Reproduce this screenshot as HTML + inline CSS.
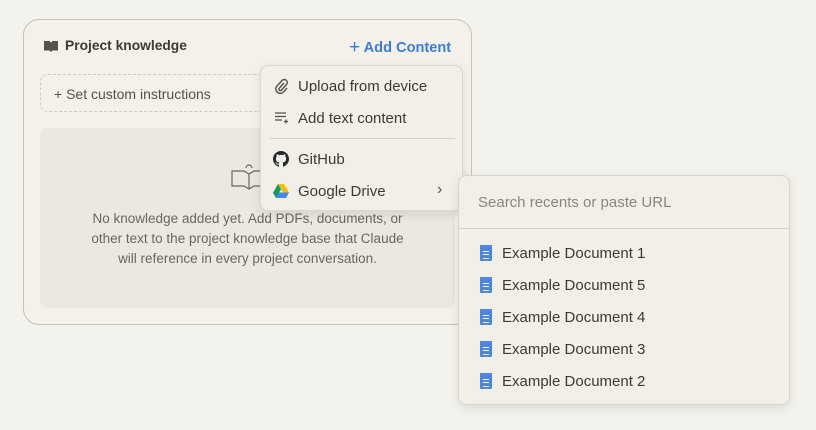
<!DOCTYPE html>
<html><head><style>
*{box-sizing:border-box;margin:0;padding:0}
body{width:816px;height:430px;background:#f4f2ec;font-family:"Liberation Sans",sans-serif;position:relative;overflow:hidden;color:#3d3a33}
.card{position:absolute;left:23px;top:19px;width:449px;height:306px;border:1px solid #c6c2b8;border-radius:16px;background:#f3f1ea}
.abs{position:absolute}
.hdr{left:43px;top:38px;font-size:13.8px;font-weight:bold;color:#3d3a33}
.add{left:349px;top:36px;font-size:14.6px;color:#3b7ddd;font-weight:bold}
.dash{left:40px;top:74px;width:260px;height:38px;border:1px dashed #cfcbc1;border-radius:8px;font-size:14px;color:#555148;padding:11px 0 0 13px}
.grey{left:40px;top:128px;width:415px;height:180px;background:#eae8df;border-radius:8px}
.desc{left:40px;top:209px;width:415px;text-align:center;font-size:13.5px;line-height:20px;color:#6b675e}
.menu{left:260px;top:65px;width:203px;height:146px;background:#f1efe8;border:1px solid #dcd8cf;border-radius:8px;box-shadow:0 3px 10px rgba(0,0,0,.1)}
.mi{position:absolute;left:37px;font-size:15px;color:#3d3a33}
.sub{left:458px;top:175px;width:332px;height:230px;background:#f1efe8;border:1px solid #d8d4cb;border-radius:8px;box-shadow:0 3px 10px rgba(0,0,0,.1)}
.di{position:absolute;left:43px;font-size:15px;color:#3d3a33}
.doc{position:absolute;left:21px;width:12px;height:16px;background:#4a86e8;border-radius:1px}
.doc:after{content:"";position:absolute;left:3px;top:6px;width:6px;height:6px;border-top:1px solid #fff;border-bottom:1px solid #fff}
.doc:before{content:"";position:absolute;left:3px;top:9px;width:6px;height:1px;background:#fff}
</style></head><body>
<div class="card"></div>
<svg class="abs" style="left:44px;top:40px" width="14" height="12" viewBox="0 0 14 12"><path d="M0 1h5.5l1.5 1.5V12L5.5 10.5H0z M14 1H8.5L7 2.5V12l1.5-1.5H14z" fill="#55524a"/></svg>
<div class="abs hdr" style="left:65px">Project knowledge</div>
<div class="abs add"><span style="font-weight:normal;font-size:19px;position:relative;top:1px">+</span> Add Content</div>
<div class="abs dash">+ Set custom instructions</div>
<div class="abs grey"></div>
<svg class="abs" style="left:231px;top:163px" width="36" height="32" viewBox="0 0 36 32"><path d="M1 8h12l5 3 5-3h12v15H23l-5 3-5-3H1z M18 11v15 M15 5a3 3 0 0 1 6 0" fill="none" stroke="#6b675e" stroke-width="1.2"/></svg>
<div class="abs desc">No knowledge added yet. Add PDFs, documents, or<br>other text to the project knowledge base that Claude<br>will reference in every project conversation.</div>
<div class="abs menu">
<svg class="abs" style="left:13px;top:12px" width="14" height="16" viewBox="0 0 14 16"><path d="M10 5l-5 5.5a1.5 1.5 0 0 0 2 2l5.5-6a3 3 0 0 0-4.5-4l-5.5 6a4.5 4.5 0 0 0 6.5 6l4-4.5" fill="none" stroke="#55524a" stroke-width="1.4"/></svg>
<div class="mi" style="top:12px">Upload from device</div>
<svg class="abs" style="left:13px;top:46px" width="14" height="12" viewBox="0 0 14 12"><path d="M1 1h11M1 4.5h11M1 8h7M10 9.5h4M12 7.5v4" stroke="#55524a" stroke-width="1.3" fill="none"/></svg>
<div class="mi" style="top:44px">Add text content</div>
<div class="abs" style="left:9px;top:72px;width:185px;height:1px;background:#d6d2c9"></div>
<svg class="abs" style="left:12px;top:85px" width="16" height="16" viewBox="0 0 16 16"><path fill="#24292f" d="M8 0C3.58 0 0 3.58 0 8c0 3.54 2.29 6.53 5.47 7.590.4.07.55-.17.55-.38 0-.19-.01-.82-.01-1.49-2.01.37-2.53-.49-2.69-.94-.09-.23-.48-.94-.82-1.13-.28-.15-.68-.52-.01-.53.63-.01 1.08.58 1.23.82.72 1.21 1.87.87 2.33.66.07-.52.28-.87.51-1.07-1.78-.2-3.64-.89-3.64-3.95 0-.87.31-1.59.82-2.15-.08-.2-.36-1.02.08-2.12 0 0 .67-.21 2.2.82.64-.18 1.32-.27 2-.27.68 0 1.36.09 2 .27 1.53-1.04 2.2-.82 2.2-.82.44 1.1.16 1.92.08 2.12.51.56.82 1.27.82 2.15 0 3.07-1.87 3.75-3.65 3.95.29.25.54.73.54 1.48 0 1.07-.01 1.93-.01 2.2 0 .21.15.46.55.38A8.013 8.013 0 0 0 16 8c0-4.42-3.58-8-8-8z"/></svg>
<div class="mi" style="top:85px">GitHub</div>
<svg class="abs" style="left:12px;top:118px" width="16" height="14" viewBox="0 0 16 14"><path d="M5 0h6l5 8.5h-6z" fill="#fbbc04"/><path d="M5 0l3 5.3L3 14 0 8.7z" fill="#0f9d58"/><path d="M3 14l2.9-5.5H16L13 14z" fill="#4285f4"/></svg>
<div class="mi" style="top:117px">Google Drive</div>
<div class="abs" style="left:176px;top:115px;font-size:16px;color:#55524a">›</div>
</div>
<div class="abs sub">
<div class="abs" style="left:19px;top:18px;font-size:15px;color:#8a867d">Search recents or paste URL</div>
<div class="abs" style="left:0;top:52px;width:330px;height:1px;background:#d6d2c9"></div>
<div class="doc" style="top:69px"></div><div class="di" style="top:69px">Example Document 1</div>
<div class="doc" style="top:101px"></div><div class="di" style="top:101px">Example Document 5</div>
<div class="doc" style="top:133px"></div><div class="di" style="top:133px">Example Document 4</div>
<div class="doc" style="top:165px"></div><div class="di" style="top:165px">Example Document 3</div>
<div class="doc" style="top:197px"></div><div class="di" style="top:197px">Example Document 2</div>
</div>
</body></html>
